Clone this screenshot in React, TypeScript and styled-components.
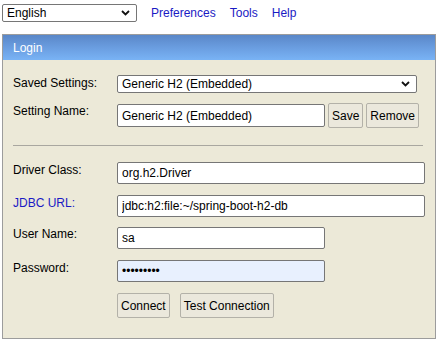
import React from 'react'
import styled, { createGlobalStyle } from 'styled-components'

const GlobalStyle = createGlobalStyle`
  body {
    margin: 0;
    background: #ffffff;
    font-family: 'Liberation Sans', Arial, sans-serif;
    font-size: 12px;
    color: #000000;
  }
`

const Page = styled.div`
  width: 440px;
  height: 344px;
  padding: 4px 0 0 2px;
  box-sizing: border-box;
`

const TopBar = styled.div`
  display: flex;
  align-items: center;
  height: 18px;
`

const NavLink = styled.a`
  color: #1a1ac4;
  text-decoration: none;
  margin-left: 14px;
  line-height: 18px;
`

const SelectWrap = styled.div<{ $width: number }>`
  position: relative;
  width: ${p => p.$width}px;
  height: 18px;
`

const Select = styled.select`
  appearance: none;
  width: 100%;
  height: 100%;
  box-sizing: border-box;
  margin: 0;
  padding: 0 20px 0 4px;
  border: 1px solid #767676;
  border-radius: 2px;
  background: #ffffff;
  font-family: inherit;
  font-size: 12px;
  color: #000000;
  outline: none;
`

const Chevron = styled.svg`
  position: absolute;
  right: 7px;
  top: 6px;
  pointer-events: none;
`

const Panel = styled.div`
  width: 434px;
  margin-top: 12px;
  border: 1px solid #9c9c9c;
  box-sizing: border-box;
`

const PanelHeader = styled.div`
  height: 25px;
  padding-left: 10px;
  display: flex;
  align-items: center;
  color: #ffffff;
  background: linear-gradient(to bottom, #5a87c8 0%, #6a9de0 50%, #79b3f5 100%);
`

const PanelBody = styled.div`
  background: #ece9d8;
  padding: 15px 10px 20px 10px;
  display: flex;
  flex-direction: column;
`

const Row = styled.div<{ $top?: number }>`
  display: flex;
  align-items: flex-start;
  margin-top: ${p => p.$top ?? 0}px;
`

const Label = styled.div<{ $link?: boolean; $pad?: number }>`
  width: 104px;
  flex: none;
  line-height: 15px;
  padding-top: ${p => p.$pad ?? 0}px;
  color: ${p => (p.$link ? '#1a1ac4' : '#000000')};
`

const Controls = styled.div`
  display: flex;
  align-items: center;
`

const Input = styled.input<{ $width: number; $fill?: string }>`
  width: ${p => p.$width}px;
  height: 22px;
  box-sizing: border-box;
  margin: 0;
  padding: 0 4px;
  border: 1px solid #767676;
  border-radius: 2px;
  background: ${p => p.$fill ?? '#ffffff'};
  font-family: inherit;
  font-size: 12px;
  color: #000000;
  outline: none;
`

const Button = styled.button<{ $left?: number }>`
  height: 25px;
  margin: 0 0 0 ${p => p.$left ?? 0}px;
  padding: 0 3px;
  border: 1px solid #b3b1a8;
  border-radius: 2px;
  background: #ebe8dc;
  font-family: inherit;
  font-size: 12px;
  color: #000000;
`

const Divider = styled.div`
  height: 1px;
  background: #a9a7a0;
  margin: 17px 2px 0 0;
`

const DropDown: React.FC<{ width: number; value: string }> = ({ width, value }) => (
  <SelectWrap $width={width}>
    <Select defaultValue={value}>
      <option>{value}</option>
    </Select>
    <Chevron width="9" height="6" viewBox="0 0 9 6">
      <path d="M1 1 L4.5 4.5 L8 1" fill="none" stroke="#111" strokeWidth="1.8" />
    </Chevron>
  </SelectWrap>
)

const App: React.FC = () => {
  return (
    <>
      <GlobalStyle />
      <Page>
        <TopBar>
          <DropDown width={135} value="English" />
          <NavLink href="#">Preferences</NavLink>
          <NavLink href="#">Tools</NavLink>
          <NavLink href="#">Help</NavLink>
        </TopBar>

        <Panel>
          <PanelHeader>Login</PanelHeader>
          <PanelBody>
            <Row>
              <Label $pad={1}>Saved Settings:</Label>
              <DropDown width={300} value="Generic H2 (Embedded)" />
            </Row>

            <Row $top={10}>
              <Label $pad={1}>Setting Name:</Label>
              <Controls>
                <Input $width={208} style={{ height: 23 }} defaultValue="Generic H2 (Embedded)" />
                <Button $left={3}>Save</Button>
                <Button $left={3}>Remove</Button>
              </Controls>
            </Row>

            <Divider />

            <Row $top={16}>
              <Label $pad={1}>Driver Class:</Label>
              <Input $width={308} defaultValue="org.h2.Driver" />
            </Row>

            <Row $top={11}>
              <Label $link $pad={1}>JDBC URL:</Label>
              <Input $width={308} defaultValue="jdbc:h2:file:~/spring-boot-h2-db" />
            </Row>

            <Row $top={10}>
              <Label>User Name:</Label>
              <Input $width={208} defaultValue="sa" />
            </Row>

            <Row $top={11}>
              <Label $pad={1}>Password:</Label>
              <Input $width={208} $fill="#e8f0fe" type="password" defaultValue="password1" />
            </Row>

            <Row $top={11}>
              <Label />
              <Controls>
                <Button>Connect</Button>
                <Button $left={10}>Test Connection</Button>
              </Controls>
            </Row>
          </PanelBody>
        </Panel>
      </Page>
    </>
  )
}

export default App
